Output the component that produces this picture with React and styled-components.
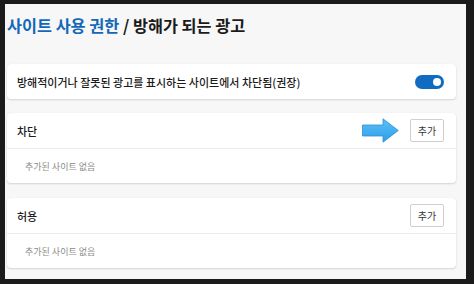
import React from "react";
import styled, { createGlobalStyle } from "styled-components";

const GlobalStyle = createGlobalStyle`
  html, body {
    margin: 0;
    padding: 0;
    background: #1b1b1b;
  }
  * {
    box-sizing: border-box;
  }
`;

const FONT = `"Noto Sans CJK KR", "Noto Sans", sans-serif`;

// 바깥 검은 테두리
const Frame = styled.div`
  width: 474px;
  height: 284px;
  padding: 4px 8px 5px 5px;
  background: #1b1b1b;
`;

const Page = styled.div`
  height: 100%;
  background: #f7f7f7;
  padding: 0 10px 0 2px;
  font-family: ${FONT};
  overflow: hidden;
`;

const Title = styled.h1`
  margin: 0;
  height: 42px;
  padding-top: 10px;
  font-size: 16.3px;
  line-height: 22px;
  font-weight: 700;
  color: #1b1b1b;
  margin-bottom: 18px;
`;

const Crumb = styled.span`
  color: #1468b8;
`;

const Card = styled.div`
  background: #fff;
  border-radius: 4px;
  box-shadow: 0 1px 2px rgba(0, 0, 0, 0.14), 0 0 1px rgba(0, 0, 0, 0.08);
  margin-bottom: ${(p) => p.gap || "14px"};
`;

const Row = styled.div`
  display: flex;
  align-items: center;
  height: ${(p) => p.h || "35px"};
  padding: 0 12px 0 10px;
`;

const Label = styled.div`
  flex: 1;
  font-size: ${(p) => p.size || "11px"};
  font-weight: 500;
  color: #1b1b1b;
`;

const Divider = styled.div`
  height: 1px;
  background: #ececec;
`;

const Empty = styled.div`
  height: 34px;
  display: flex;
  align-items: center;
  padding-left: 18px;
  font-size: 9px;
  color: #8a8a8a;
`;

const Toggle = styled.div`
  width: 29px;
  height: 14px;
  border-radius: 7px;
  background: #0f6cc0;
  display: flex;
  align-items: center;
  justify-content: flex-end;
  padding-right: 3px;
`;

const Knob = styled.div`
  width: 8px;
  height: 8px;
  border-radius: 50%;
  background: #fff;
`;

const AddButton = styled.button`
  width: 34px;
  height: 23px;
  padding: 0;
  border: 1px solid #cfcfcf;
  border-radius: 2px;
  background: #fff;
  font-family: ${FONT};
  font-size: 10px;
  color: #333;
`;

const ArrowWrap = styled.div`
  display: flex;
  margin-right: 11px;
`;

function Arrow() {
  return (
    <ArrowWrap>
      <svg width="37" height="25" viewBox="0 0 37 25">
        <defs>
          <linearGradient id="ag" x1="0" y1="0" x2="0" y2="1">
            <stop offset="0" stopColor="#5cc0f8" />
            <stop offset="1" stopColor="#2f9ee8" />
          </linearGradient>
        </defs>
        <path
          d="M0.5 7 H21 V0.8 L36.3 12.5 L21 24.2 V18 H0.5 Z"
          fill="url(#ag)"
          stroke="#2a8fd6"
          strokeWidth="0.8"
          strokeLinejoin="round"
        />
      </svg>
    </ArrowWrap>
  );
}

function SiteList({ name, arrow, gap }) {
  return (
    <Card gap={gap}>
      <Row h="35px">
        <Label size="11px">{name}</Label>
        {arrow && <Arrow />}
        <AddButton>추가</AddButton>
      </Row>
      <Divider />
      <Empty>추가된 사이트 없음</Empty>
    </Card>
  );
}

export default function App() {
  return (
    <>
      <GlobalStyle />
      <Frame>
        <Page>
          <Title>
            <Crumb>사이트 사용 권한</Crumb> / 방해가 되는 광고
          </Title>
          <Card>
            <Row>
              <Label>방해적이거나 잘못된 광고를 표시하는 사이트에서 차단됨(권장)</Label>
              <Toggle>
                <Knob />
              </Toggle>
            </Row>
          </Card>
          <SiteList name="차단" arrow gap="15px" />
          <SiteList name="허용" />
        </Page>
      </Frame>
    </>
  );
}
